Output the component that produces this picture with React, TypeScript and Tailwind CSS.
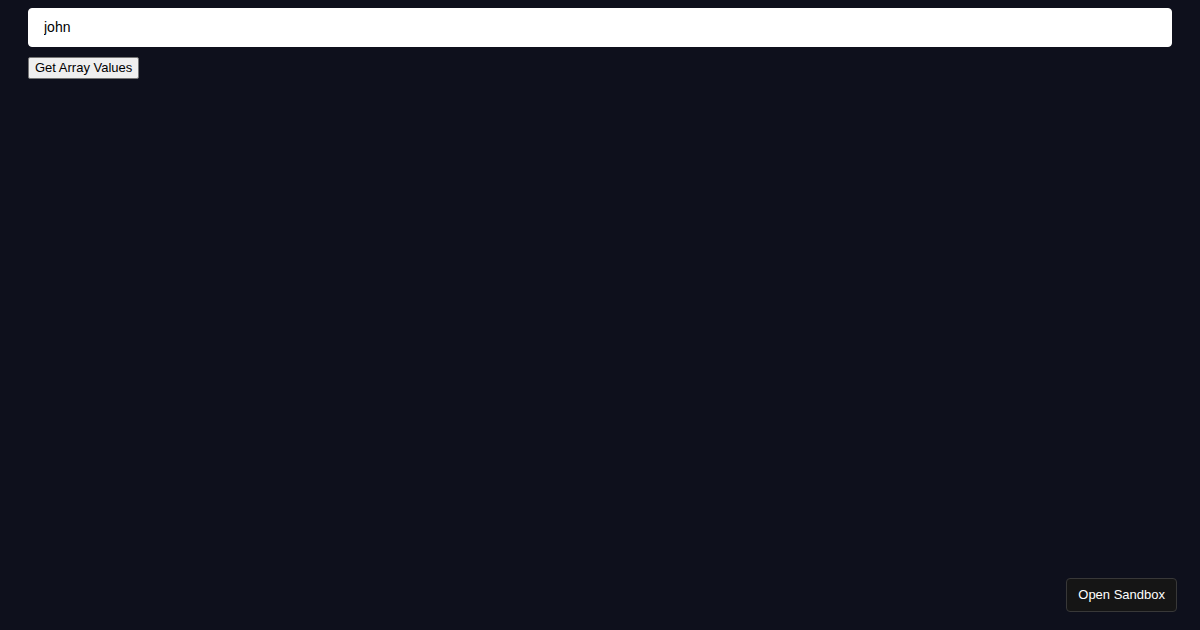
import React, { useState } from 'react';

const App: React.FC = () => {
  const [name, setName] = useState('john');
  const [values, setValues] = useState<string[]>([]);

  const handleGetValues = () => {
    setValues(name.split(',').map(v => v.trim()).filter(Boolean));
  };

  return (
    <div className="min-h-screen bg-[#0e101c] px-7 py-2 font-['Liberation_Sans',sans-serif]">
      <input
        type="text"
        name="name"
        aria-label="Name"
        value={name}
        onChange={e => setName(e.target.value)}
        className="block w-full rounded-sm border border-white bg-white px-[15px] py-[9px] text-sm leading-[19px] text-black outline-none"
      />
      <button
        type="button"
        onClick={handleGetValues}
        className="mt-[10px] block rounded-[2px] border border-[#767676] bg-[#efefef] px-[6px] text-[13px] leading-5 text-black"
      >
        Get Array Values
      </button>

      {values.length > 0 && (
        <ul className="mt-4 text-sm text-white">
          {values.map(v => (
            <li key={v}>{v}</li>
          ))}
        </ul>
      )}

      <a
        href="#sandbox"
        className="fixed right-[23px] bottom-[18px] rounded-sm border border-[#383838] bg-[#151515] px-[11px] py-2 text-[13px] leading-4 text-white"
      >
        Open Sandbox
      </a>
    </div>
  );
};

export default App;
